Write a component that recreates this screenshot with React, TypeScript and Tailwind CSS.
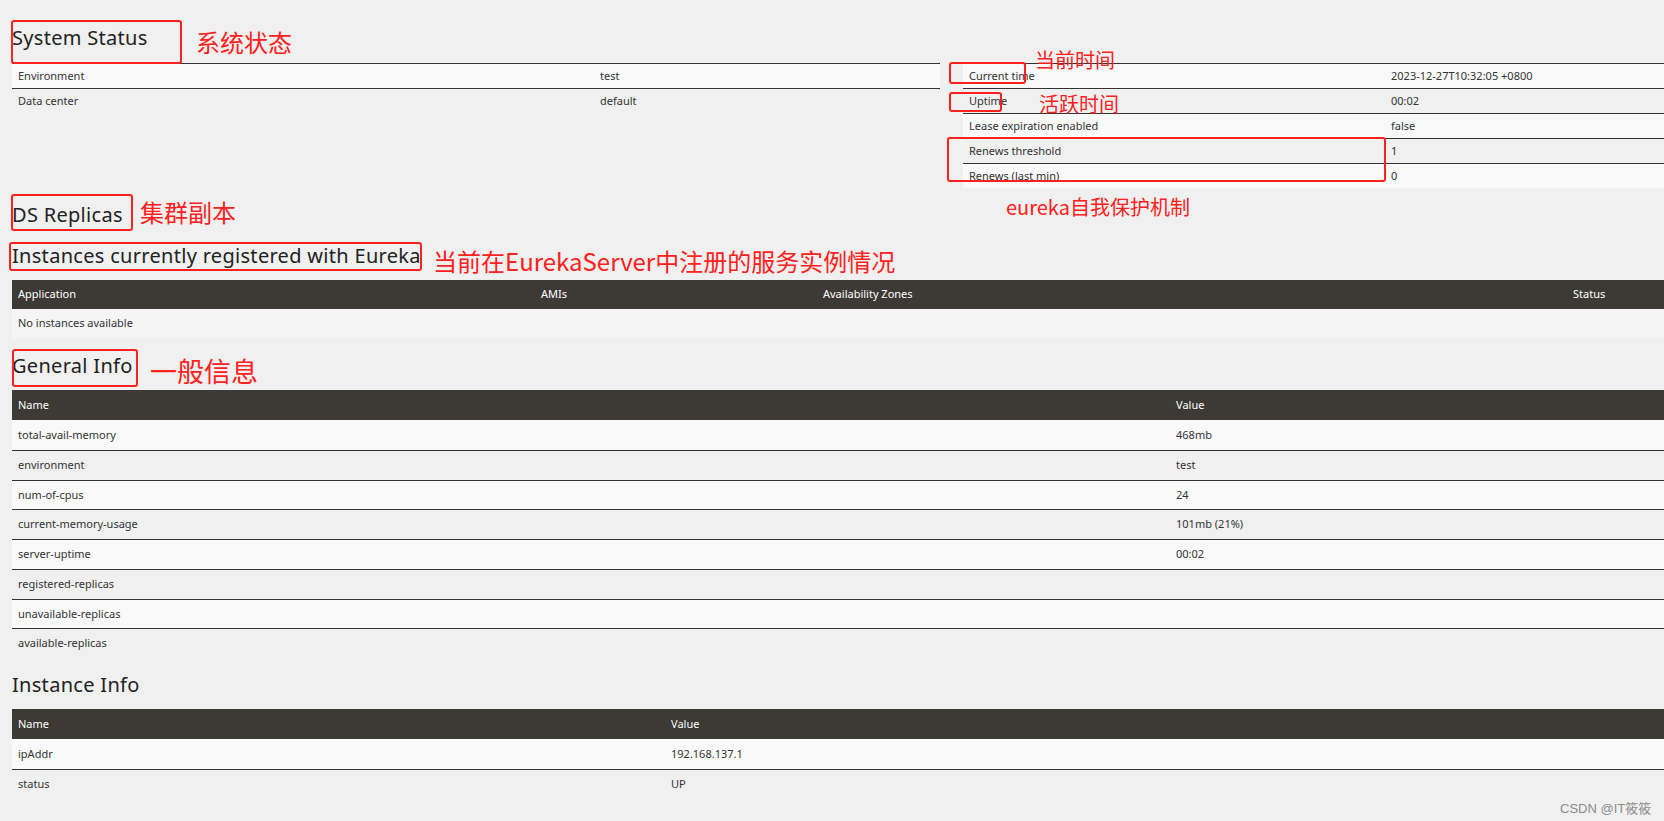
import React from 'react'

const SYSTEM_LEFT = [
  { name: 'Environment', value: 'test' },
  { name: 'Data center', value: 'default' },
]

const SYSTEM_RIGHT = [
  { name: 'Current time', value: '2023-12-27T10:32:05 +0800' },
  { name: 'Uptime', value: '00:02' },
  { name: 'Lease expiration enabled', value: 'false' },
  { name: 'Renews threshold', value: '1' },
  { name: 'Renews (last min)', value: '0' },
]

const GENERAL_INFO = [
  { name: 'total-avail-memory', value: '468mb' },
  { name: 'environment', value: 'test' },
  { name: 'num-of-cpus', value: '24' },
  { name: 'current-memory-usage', value: '101mb (21%)' },
  { name: 'server-uptime', value: '00:02' },
  { name: 'registered-replicas', value: '' },
  { name: 'unavailable-replicas', value: '' },
  { name: 'available-replicas', value: '' },
]

const INSTANCE_INFO = [
  { name: 'ipAddr', value: '192.168.137.1' },
  { name: 'status', value: 'UP' },
]

function Heading({ children, className = '' }: { children: React.ReactNode; className?: string }) {
  return (
    <h2 className={`h-[24px] text-[20px] leading-[24px] tracking-[0.3px] text-[#222] ${className}`}>{children}</h2>
  )
}

function StatusTable({
  rows,
  labelWidth,
  className = '',
}: {
  rows: { name: string; value: string }[]
  labelWidth: string
  className?: string
}) {
  return (
    <div className={className}>
      {rows.map((r, i) => (
        <div
          key={r.name}
          className={`flex h-[25px] items-center border-t border-[#333] ${i % 2 === 0 ? 'bg-[#f9f9f9]' : ''}`}
        >
          <div className={`${labelWidth} shrink-0 px-[6px]`}>{r.name}</div>
          <div className="px-[6px]">{r.value}</div>
        </div>
      ))}
    </div>
  )
}

function InfoTable({
  rows,
  valueLeft,
  className = '',
}: {
  rows: { name: string; value: string }[]
  valueLeft: string
  className?: string
}) {
  return (
    <div className={className}>
      <div className="flex h-[30px] items-center bg-[#3d3a35] text-white">
        <div className={`${valueLeft} shrink-0 px-[6px]`}>Name</div>
        <div className="px-[6px]">Value</div>
      </div>
      {rows.map((r, i) => (
        <div
          key={r.name}
          className={`flex h-[29.75px] items-center ${i > 0 ? 'border-t border-[#333]' : ''} ${
            i % 2 === 0 ? 'bg-[#f9f9f9]' : ''
          }`}
        >
          <div className={`${valueLeft} shrink-0 px-[6px]`}>{r.name}</div>
          <div className="px-[6px]">{r.value}</div>
        </div>
      ))}
    </div>
  )
}

function RedBox({ className }: { className: string }) {
  return <div className={`absolute rounded-[3px] border-2 border-[#ff2020] ${className}`} />
}

function Note({ children, className }: { children: React.ReactNode; className: string }) {
  return (
    <div
      className={`absolute whitespace-nowrap leading-none text-[#ff2020] font-['Noto_Sans_CJK_SC','Noto_Sans',sans-serif] ${className}`}
    >
      {children}
    </div>
  )
}

export default function App() {
  return (
    <div className="relative min-h-[821px] w-[1664px] overflow-hidden bg-[#f0f0f0] pl-[12px] text-[11px] text-[#333] font-['Noto_Sans','Open_Sans',sans-serif]">
      {/* System status */}
      <Heading className="mt-[26px]">System Status</Heading>
      <div className="mt-[13px] flex gap-[23px]">
        <StatusTable rows={SYSTEM_LEFT} labelWidth="w-[582px]" className="w-[928px]" />
        <StatusTable rows={SYSTEM_RIGHT} labelWidth="w-[422px]" className="w-[701px]" />
      </div>

      {/* Replicas */}
      <Heading className="mt-[15px]">DS Replicas</Heading>
      <Heading className="mt-[17px]">Instances currently registered with Eureka</Heading>
      <div className="mt-[12px]">
        <div className="flex h-[29px] items-center bg-[#3d3a35] text-white">
          <div className="w-[523px] shrink-0 px-[6px]">Application</div>
          <div className="w-[282px] shrink-0 px-[6px]">AMIs</div>
          <div className="w-[750px] shrink-0 px-[6px]">Availability Zones</div>
          <div className="px-[6px]">Status</div>
        </div>
        <div className="flex h-[29px] items-center bg-[#f5f5f5] px-[6px]">No instances available</div>
      </div>

      {/* General info */}
      <Heading className="mt-[16px]">General Info</Heading>
      <InfoTable rows={GENERAL_INFO} valueLeft="w-[1158px]" className="mt-[12px]" />

      {/* Instance info */}
      <Heading className="mt-[15px]">Instance Info</Heading>
      <InfoTable rows={INSTANCE_INFO} valueLeft="w-[653px]" className="mt-[12px]" />

      {/* annotations */}
      <RedBox className="left-[11px] top-[20px] h-[44px] w-[171px]" />
      <Note className="left-[196px] top-[30px] text-[24px]">系统状态</Note>
      <RedBox className="left-[949px] top-[62px] h-[22px] w-[77px]" />
      <Note className="left-[1035px] top-[50px] text-[20px]">当前时间</Note>
      <RedBox className="left-[949px] top-[92px] h-[20px] w-[53px]" />
      <Note className="left-[1039px] top-[94px] text-[20px]">活跃时间</Note>
      <RedBox className="left-[947px] top-[137px] h-[45px] w-[439px]" />
      <Note className="left-[1006px] top-[197px] text-[20px]">eureka自我保护机制</Note>
      <RedBox className="left-[11px] top-[194px] h-[37px] w-[122px]" />
      <Note className="left-[140px] top-[200px] text-[24px]">集群副本</Note>
      <RedBox className="left-[9px] top-[242px] h-[29px] w-[413px]" />
      <Note className="left-[433px] top-[249px] text-[24px]">当前在EurekaServer中注册的服务实例情况</Note>
      <RedBox className="left-[12px] top-[349px] h-[38px] w-[126px]" />
      <Note className="left-[150px] top-[357px] text-[27px]">一般信息</Note>

      <div className="absolute left-[1560px] top-[799px] whitespace-nowrap text-[13px] text-[#8c8c8c] font-['Liberation_Sans','Noto_Sans_CJK_SC',sans-serif]">
        CSDN @IT筱筱
      </div>
    </div>
  )
}
